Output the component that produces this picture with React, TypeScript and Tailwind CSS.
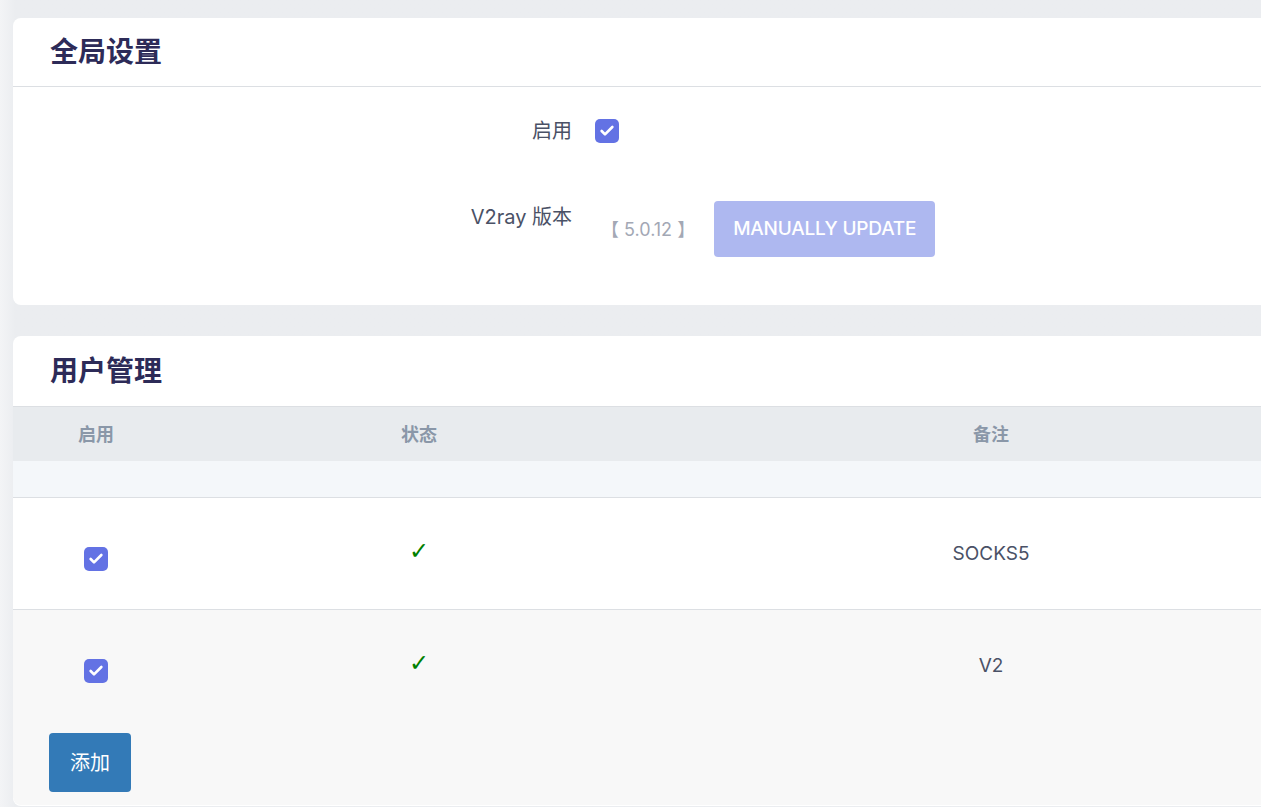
import { Check } from "lucide-react";

const FONT = { fontFamily: 'Inter, "Noto Sans CJK SC", sans-serif' };

/* users table — two rows, as shown */
const USERS = [
  { remark: "SOCKS5", bg: "bg-white" },
  { remark: "V2", bg: "bg-[#f8f8f8]" },
];

function Checkbox() {
  return (
    <span className="inline-flex h-6 w-6 items-center justify-center rounded-[5px] bg-[#6372e4]">
      <Check className="h-4 w-4 text-white" strokeWidth={4} />
    </span>
  );
}

export default function App() {
  return (
    <div
      className="h-[807px] w-[1261px] overflow-hidden bg-gradient-to-r from-[#f3f4f6] from-0% to-[#ebedf0] to-[1.2%] pl-[13px] pt-[18px]"
      style={FONT}
    >
      <div className="w-[1310px]">
        {/* 全局设置 */}
        <section className="h-[287px] rounded-lg bg-white">
          <h2 className="flex h-[69px] items-center border-b border-[#dcdfe3] pl-[37px] text-[28px] font-bold text-[#2d2b58]">
            全局设置
          </h2>
          <div className="flex items-center pt-[29px]">
            <div className="w-[559px] pb-[2px] text-right text-[20px] text-[#4a5166]">启用</div>
            <div className="pl-[23px]">
              <Checkbox />
            </div>
          </div>
          <div className="mt-[53px] flex">
            <div className="w-[559px] pt-px text-right text-[20px] text-[#4a5166]">V2ray 版本</div>
            <div className="flex items-center pl-[29px]">
              <span className="text-[18px] text-[#a3a8b5]">【 5.0.12 】</span>
              <button className="ml-[19px] h-[56px] rounded bg-[#aeb8f0] px-[19px] text-[19px] font-medium tracking-[-0.2px] text-white">
                MANUALLY UPDATE
              </button>
            </div>
          </div>
        </section>

        {/* 用户管理 */}
        <section className="mt-[31px] h-[470px] rounded-lg bg-white">
          <h2 className="flex h-[70px] items-center pl-[37px] text-[28px] font-bold text-[#2d2b58]">
            用户管理
          </h2>
          <div className="flex h-[55px] items-center border-t border-[#dcdfe3] bg-[#e8ebee] text-[18px] font-bold text-[#8a97a8]">
            <div className="w-[166px] text-center">启用</div>
            <div className="w-[480px] text-center">状态</div>
            <div className="flex-1 text-center">备注</div>
          </div>
          <div className="h-[37px] border-b border-[#dcdfe3] bg-[#f4f7fa]" />
          {USERS.map((u, i) => (
            <div
              key={u.remark}
              className={`flex h-[112px] items-center ${u.bg} ${i === 0 ? "border-b border-[#dcdfe3]" : ""}`}
            >
              <div className="flex w-[166px] justify-center pt-[10px]">
                <Checkbox />
              </div>
              <div
                className="w-[480px] pb-[6px] text-center text-[24px] leading-none text-[#008000]"
                style={{ fontFamily: '"DejaVu Sans", sans-serif' }}
              >
                ✓
              </div>
              <div className="flex-1 pt-px text-center text-[19px] text-[#4a5166]">{u.remark}</div>
            </div>
          ))}
          <div className="h-[83px] rounded-b-lg bg-[#f8f8f8] pl-[36px] pt-[11px]">
            <button className="h-[59px] rounded bg-[#337ab7] px-[21px] text-[20px] text-white">添加</button>
          </div>
        </section>
      </div>
    </div>
  );
}
